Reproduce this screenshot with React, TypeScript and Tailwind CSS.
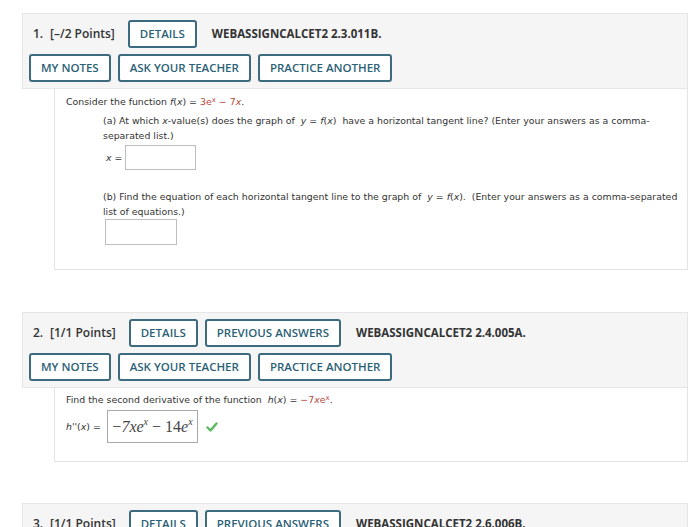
import React from 'react';

const btn =
  'h-[28px] px-[10px] flex items-center border-2 border-[#3c6b80] rounded-[3px] text-[11.5px] font-semibold text-[#2b5f76] bg-white leading-none';

function Btn({ children }: { children: React.ReactNode }) {
  return <div className={btn}>{children}</div>;
}

function Header({ num, points, code, prev }: { num: string; points: string; code: string; prev?: boolean }) {
  return (
    <div
      className="bg-[#f5f5f5] border border-[#e6e6e6] px-[6px] pt-[6px] pb-[6px] flex flex-col gap-[6px]"
      style={{ fontFamily: '"Open Sans", sans-serif' }}
    >
      <div className="flex items-center">
        <span className="ml-[4px] text-[12px] font-semibold text-[#333] w-[17px]">{num}</span>
        <span className="text-[12px] font-semibold text-[#333]">{points}</span>
        <div className="ml-[13px] flex gap-[7px]">
          <Btn>DETAILS</Btn>
          {prev && <Btn>PREVIOUS ANSWERS</Btn>}
        </div>
        <span className="ml-[15px] text-[11.5px] font-bold text-[#333]">{code}</span>
      </div>
      <div className="flex gap-[7px]">
        <Btn>MY NOTES</Btn>
        <Btn>ASK YOUR TEACHER</Btn>
        <Btn>PRACTICE ANOTHER</Btn>
      </div>
    </div>
  );
}

const red = 'text-[#b4483b]';
const sup = 'text-[7px] leading-none';

export default function App() {
  return (
    <div className="w-[700px] h-[527px] overflow-hidden bg-white pt-[13px]">
      {/* Question 1 */}
      <div className="ml-[22px] w-[666px]">
        <Header num="1." points="[–/2 Points]" code="WEBASSIGNCALCET2 2.3.011B." />
        <div
          className="ml-[32px] border-l border-r border-b border-[#e3e3e3] pl-[11px] pt-[5px] pb-[24px] text-[9.4px] leading-[15px] text-[#333]"
          style={{ fontFamily: '"DejaVu Sans", Verdana, sans-serif' }}
        >
          <p>
            Consider the function <i>f</i>(<i>x</i>) = <span className={red}>3e<sup className={sup}>x</sup> − 7<i>x</i></span>.
          </p>
          <div className="ml-[37px] mt-[4px]">
            <p>
              (a) At which <i>x</i>-value(s) does the graph of &nbsp;<i>y</i> = <i>f</i>(<i>x</i>)&nbsp; have a horizontal tangent line? (Enter your answers as a comma-separated list.)
            </p>
            <div className="flex items-center mt-[2px] ml-[3px]">
              <span className="w-[19px]"><i>x</i> =</span>
              <div className="w-[71px] h-[25px] border border-[#bdbdbd] bg-white" />
            </div>
            <p className="mt-[19px]">
              (b) Find the equation of each horizontal tangent line to the graph of &nbsp;<i>y</i> = <i>f</i>(<i>x</i>).&nbsp; (Enter your answers as a comma-separated list of equations.)
            </p>
            <div className="ml-[2px] w-[72px] h-[26px] border border-[#bdbdbd] bg-white" />
          </div>
        </div>
      </div>

      {/* Question 2 */}
      <div className="ml-[22px] w-[666px] mt-[42px]">
        <Header num="2." points="[1/1 Points]" code="WEBASSIGNCALCET2 2.4.005A." prev />
        <div
          className="ml-[32px] border-l border-r border-b border-[#e3e3e3] pl-[11px] pt-[4px] pb-[18px] text-[9.4px] leading-[15px] text-[#333]"
          style={{ fontFamily: '"DejaVu Sans", Verdana, sans-serif' }}
        >
          <p>
            Find the second derivative of the function &nbsp;<i>h</i>(<i>x</i>) = <span className={red}>−7<i>x</i>e<sup className={sup}>x</sup></span>.
          </p>
          <div className="flex items-center mt-[3px]">
            <span className="w-[41px]"><i>h</i>''(<i>x</i>) =</span>
            <div
              className="w-[91px] h-[33px] border border-[#a8a8a8] flex items-center justify-center text-[16px] italic text-[#444]"
              style={{ fontFamily: '"Liberation Serif", serif' }}
            >
              <span className="not-italic">−</span>7<span>xe</span><sup className="text-[10px] leading-none">x</sup>
              <span className="not-italic mx-[4px]">−</span>
              <span className="not-italic">14</span>e<sup className="text-[10px] leading-none">x</sup>
            </div>
            <svg className="ml-[8px]" width="12" height="10" viewBox="0 0 12 10">
              <path d="M1.5 5.5 L4.5 8.5 L10.5 1.5" fill="none" stroke="#5cb85c" strokeWidth="2.4" strokeLinecap="round" strokeLinejoin="round" />
            </svg>
          </div>
        </div>
      </div>

      {/* Question 3 */}
      <div className="ml-[22px] w-[666px] mt-[41px]">
        <Header num="3." points="[1/1 Points]" code="WEBASSIGNCALCET2 2.6.006B." prev />
      </div>
    </div>
  );
}
